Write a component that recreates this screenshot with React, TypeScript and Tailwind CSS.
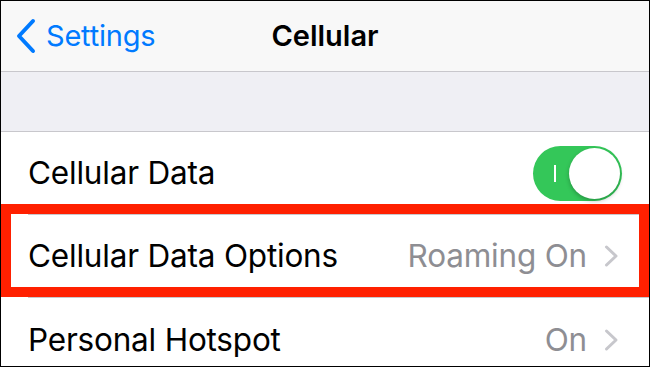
import React from 'react'

function Chevron() {
  return (
    <svg width="15" height="24" viewBox="0 0 15 24" fill="none" className="shrink-0">
      <path d="M2.5 3 L12 12 L2.5 21" stroke="#c7c7cc" strokeWidth="3" strokeLinecap="round" strokeLinejoin="round" />
    </svg>
  )
}

function Toggle() {
  return (
    <div className="relative w-[89px] h-[55px] rounded-full bg-[#34c759] shrink-0">
      <div className="absolute left-[21px] top-[19px] w-[2px] h-[17px] bg-white" />
      <div className="absolute right-[2px] top-[2px] w-[51px] h-[51px] rounded-full bg-white shadow-[0_2px_4px_rgba(0,0,0,0.25)]" />
    </div>
  )
}

function Row({ label, value, toggle, last }: { label: string; value?: string; toggle?: boolean; last?: boolean }) {
  return (
    <div className="pl-[27px] bg-white h-[83px] shrink-0">
      <div className={`h-full flex items-center justify-between pr-[27px] ${last ? '' : 'border-b border-[#c8c7cc]'}`}>
        <span className="text-[31.5px] text-black tracking-[-0.2px]">{label}</span>
        {toggle ? (
          <Toggle />
        ) : (
          <div className="flex items-center gap-[17px] pr-[3px]">
            <span className="text-[31.5px] text-[#8e8e93] tracking-[-0.2px]">{value}</span>
            <Chevron />
          </div>
        )}
      </div>
    </div>
  )
}

export default function App() {
  return (
    <div className="w-[650px] h-[367px] overflow-hidden bg-white border border-black relative flex flex-col font-['Inter','Liberation_Sans',sans-serif]">
      {/* Nav bar */}
      <div className="h-[71px] shrink-0 bg-[#f8f8f8] border-b border-[#c8c7cc] grid grid-cols-[1fr_auto_1fr] items-center">
        <div className="flex items-center pl-[14px] gap-[9px] text-[#007aff]">
          <svg width="22" height="36" viewBox="0 0 22 36" fill="none">
            <path d="M18 3 L4 18 L18 33" stroke="#007aff" strokeWidth="4" strokeLinecap="round" strokeLinejoin="round" />
          </svg>
          <span className="text-[29px] tracking-[-0.2px]">Settings</span>
        </div>
        <span className="text-[29px] font-semibold text-black">Cellular</span>
        <div />
      </div>

      {/* Section gap */}
      <div className="h-[60px] shrink-0 bg-[#efeff4] border-b border-[#c8c7cc]" />

      <Row label="Cellular Data" toggle />
      <Row label="Cellular Data Options" value="Roaming On" />
      <Row label="Personal Hotspot" value="On" last />

      {/* Highlight box */}
      <div className="absolute left-0 top-[203px] w-[648px] h-[93px] border-[10px] border-[#ff2000] pointer-events-none" />
    </div>
  )
}
